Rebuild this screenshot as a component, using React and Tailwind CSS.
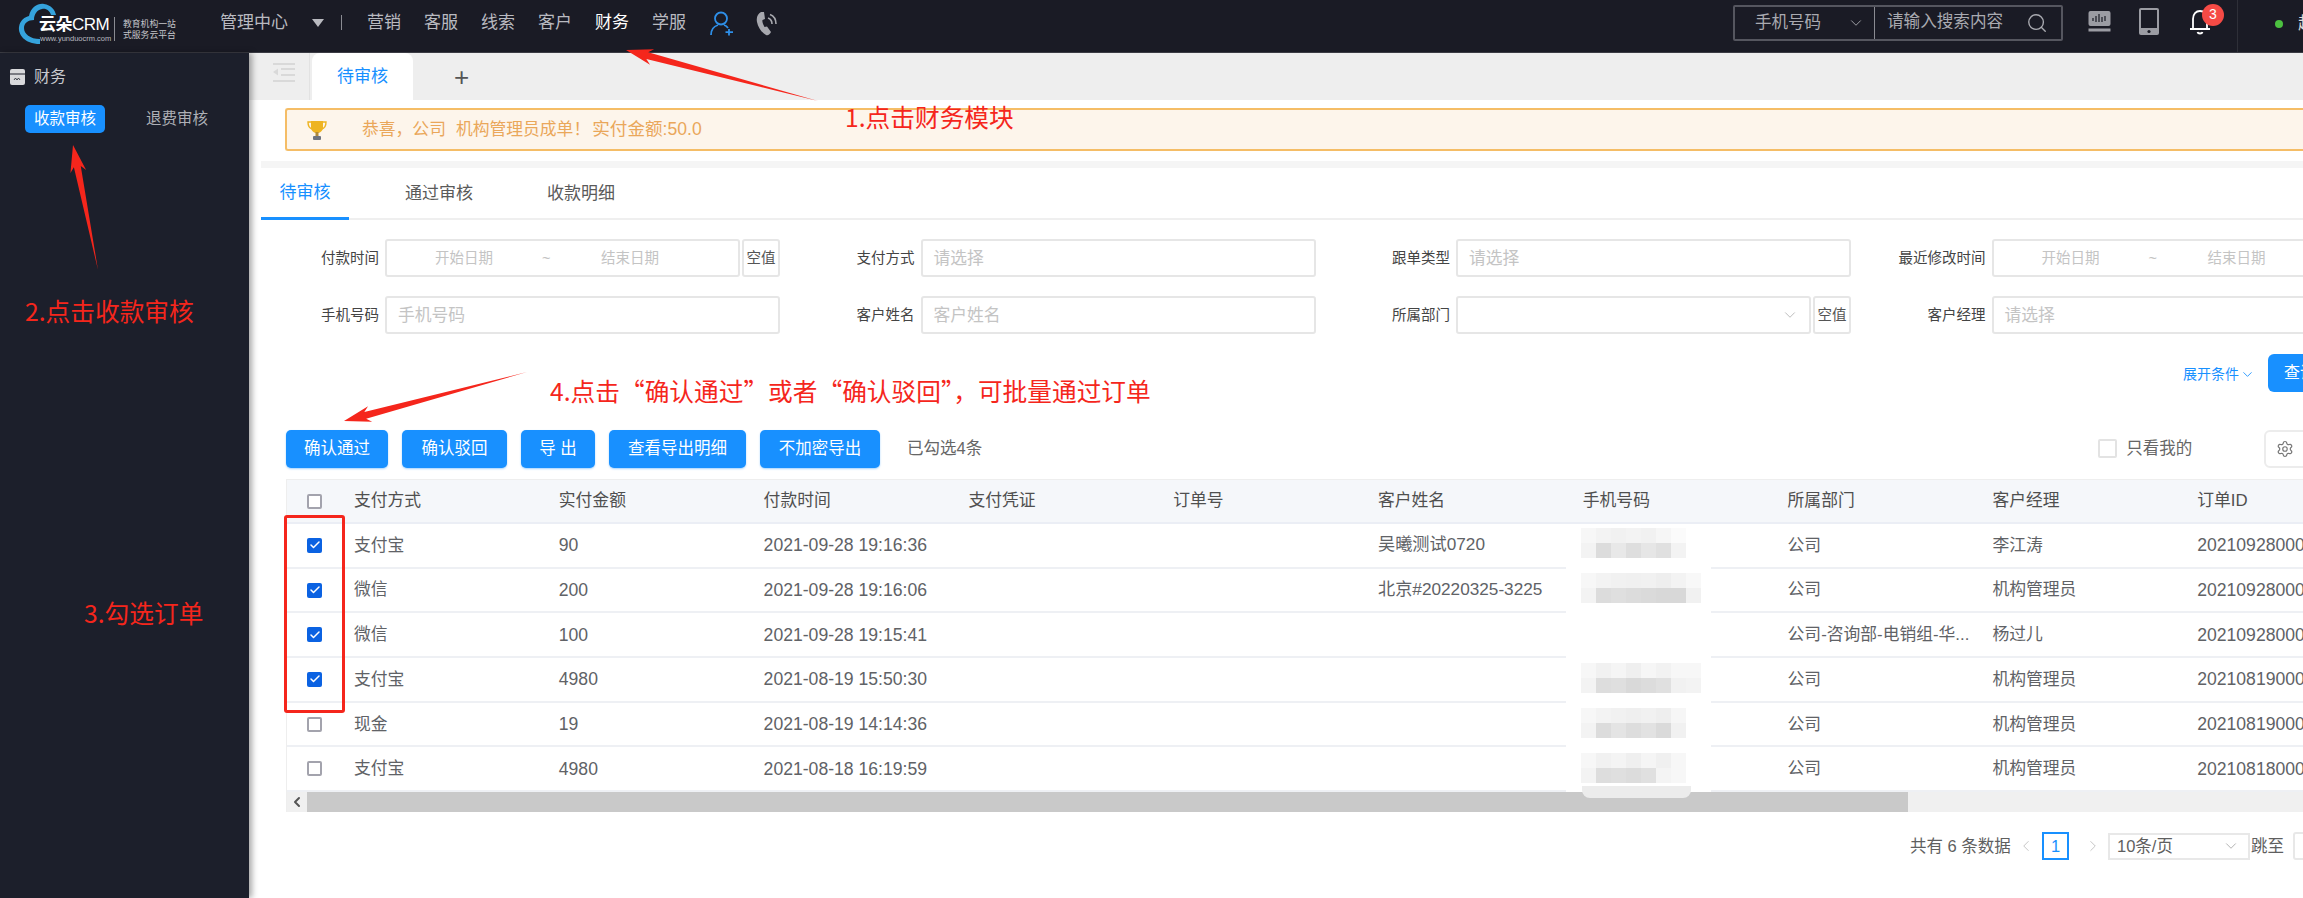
import { Check, ChevronDown, ChevronLeft, ChevronRight, Search, Settings } from "lucide-react"

const navItems = ["营销", "客服", "线索", "客户", "财务", "学服"]
const columns = ["支付方式", "实付金额", "付款时间", "支付凭证", "订单号", "客户姓名", "手机号码", "所属部门", "客户经理", "订单ID"]
const rows = [
  { pay: "支付宝", amount: "90", time: "2021-09-28 19:16:36", name: "吴曦测试0720", dept: "公司", owner: "李江涛", id: "2021092800012", checked: true },
  { pay: "微信", amount: "200", time: "2021-09-28 19:16:06", name: "北京#20220325-3225", dept: "公司", owner: "机构管理员", id: "2021092800011", checked: true },
  { pay: "微信", amount: "100", time: "2021-09-28 19:15:41", name: "", dept: "公司-咨询部-电销组-华...", owner: "杨过儿", id: "2021092800010", checked: true },
  { pay: "支付宝", amount: "4980", time: "2021-08-19 15:50:30", name: "", dept: "公司", owner: "机构管理员", id: "2021081900009", checked: true },
  { pay: "现金", amount: "19", time: "2021-08-19 14:14:36", name: "", dept: "公司", owner: "机构管理员", id: "2021081900008", checked: false },
  { pay: "支付宝", amount: "4980", time: "2021-08-18 16:19:59", name: "", dept: "公司", owner: "机构管理员", id: "2021081800007", checked: false },
]
const actions = [
  { label: "确认通过", w: "w-[102px]" },
  { label: "确认驳回", w: "w-[105px]" },
  { label: "导 出", w: "w-[74px]" },
  { label: "查看导出明细", w: "w-[137px]" },
  { label: "不加密导出", w: "w-[120px]" },
]

// mosaic over the phone column: top pixel row, bottom pixel row
const mosaic = [
  { top: "top-[3px]", a: ["bg-[#f7f7f7]", "bg-[#f3f3f3]", "bg-[#f1f1f1]", "bg-[#f3f3f3]", "bg-[#f1f1f1]", "bg-[#f6f6f6]", "bg-[#fbfbfb]", "bg-white"], b: ["bg-[#f3f3f3]", "bg-[#dcdcdc]", "bg-[#e8e8e8]", "bg-[#dedede]", "bg-[#e6e6e6]", "bg-[#e0e0e0]", "bg-[#f3f3f3]", "bg-white"] },
  { top: "top-[48px]", a: ["bg-[#f7f7f7]", "bg-[#f3f3f3]", "bg-[#f1f1f1]", "bg-[#f0f0f0]", "bg-[#f1f1f1]", "bg-[#eeeeee]", "bg-[#f3f3f3]", "bg-[#f8f8f8]"], b: ["bg-[#f3f3f3]", "bg-[#dcdcdc]", "bg-[#dfdfdf]", "bg-[#dcdcdc]", "bg-[#dadada]", "bg-[#d8d8d8]", "bg-[#d8d8d8]", "bg-[#f1f1f1]"] },
  { top: "top-[138px]", a: ["bg-[#f7f7f7]", "bg-[#f1f1f1]", "bg-[#f5f5f5]", "bg-[#efefef]", "bg-[#f6f6f6]", "bg-[#f2f2f2]", "bg-[#f7f7f7]", "bg-[#f7f7f7]"], b: ["bg-[#f3f3f3]", "bg-[#dddddd]", "bg-[#dfdfdf]", "bg-[#d9d9d9]", "bg-[#dcdcdc]", "bg-[#e0e0e0]", "bg-[#f1f1f1]", "bg-[#f3f3f3]"] },
  { top: "top-[183px]", a: ["bg-[#f7f7f7]", "bg-[#f3f3f3]", "bg-[#f1f1f1]", "bg-[#efefef]", "bg-[#f1f1f1]", "bg-[#eeeeee]", "bg-[#f6f6f6]", "bg-white"], b: ["bg-[#f3f3f3]", "bg-[#dcdcdc]", "bg-[#e4e4e4]", "bg-[#dddddd]", "bg-[#e2e2e2]", "bg-[#dadada]", "bg-[#f1f1f1]", "bg-white"] },
  { top: "top-[228px]", a: ["bg-[#f7f7f7]", "bg-[#f1f1f1]", "bg-[#f4f4f4]", "bg-[#efefef]", "bg-[#f5f5f5]", "bg-[#f0f0f0]", "bg-[#f7f7f7]", "bg-white"], b: ["bg-[#f3f3f3]", "bg-[#dddddd]", "bg-[#dfdfdf]", "bg-[#dcdcdc]", "bg-[#e0e0e0]", "bg-[#f4f4f4]", "bg-[#f7f7f7]", "bg-white"] },
]

function arrowPoints(x1, y1, x2, y2) {
  const len = Math.hypot(x2 - x1, y2 - y1)
  const dx = (x2 - x1) / len
  const dy = (y2 - y1) / len
  const at = (back, side) => `${x2 - dx * back - dy * side},${y2 - dy * back + dx * side}`
  return [`${x1},${y1}`, at(22, 3.5), at(27, 8), at(0, 0), at(27, -8), at(22, -3.5)].join(" ")
}

function Box({ checked }) {
  if (checked) {
    return (
      <span className="flex h-[15px] w-[15px] items-center justify-center rounded-[2px] bg-[#0b62e2]">
        <Check size={12} strokeWidth={3} color="#fff" />
      </span>
    )
  }
  return <span className="block h-[15px] w-[15px] rounded-[2px] border-2 border-[#a3a3ad] bg-white" />
}

function Field({ label, children }) {
  return (
    <div className="flex items-center gap-[6px]">
      <span className="w-[118px] pt-[1px] text-right text-[14.5px] text-[#444]">{label}</span>
      <div className="flex h-[38px] w-[395px] gap-[2px] text-[16.8px]">{children}</div>
    </div>
  )
}

function TextBox({ text }) {
  return (
    <div className="flex h-full flex-1 items-center rounded-[3px] border-2 border-[#e6e6e6] pl-[11px] pt-[2px] text-[#c4c4c4]">{text}</div>
  )
}

function DateBox() {
  return (
    <div className="flex h-full flex-1 items-center rounded-[3px] border-2 border-[#e6e6e6] pt-[2px] text-[14.5px] text-[#c4c4c4]">
      <span className="ml-[48px] w-[58px]">开始日期</span>
      <span className="ml-[49px] w-[58px]">~</span>
      <span className="ml-[1px]">结束日期</span>
    </div>
  )
}

function EmptyValue() {
  return (
    <div className="flex h-full w-[38px] shrink-0 items-center justify-center rounded-[3px] border-2 border-[#e6e6e6] pt-[1px] text-[14.5px] text-[#555]">空值</div>
  )
}

export default function App() {
  return (
    <div className="relative h-[898px] w-[2303px] overflow-hidden bg-white font-['Liberation_Sans','Noto_Sans_CJK_SC',sans-serif]">
      {/* top bar */}
      <header className="flex h-[53px] w-max items-center whitespace-nowrap border-b border-[#3b3c44] bg-[#1a1b25] pb-[7px] text-[17px] text-[#b9bac0]">
        <div className="relative ml-[18px] flex h-[52px] w-[190px] shrink-0 items-center self-start">
          <svg width="60" height="44" viewBox="0 0 60 44" className="absolute left-0 top-[2px]">
            <path d="M22 42 C6 42 0 32 1 25 C2 18 7 15 11 14 C13 5 20 1 26 2 C33 3 37 8 38 13 L33 13 C32 9 28 6 24 7 C19 8 16 12 16 18 C10 18 6 21 6 26 C6 32 12 37 22 37 Z" fill="#35a3dc" />
          </svg>
          <div className="absolute left-[21px] top-[15px] text-[17px] leading-[20px] tracking-[-0.5px] text-white"><b>云朵</b>CRM</div>
          <div className="absolute left-[22px] top-[35px] text-[7.5px] leading-[8px] text-[#b9bac0]">www.yunduocrm.com</div>
          <div className="absolute left-[96px] top-[17px] h-[24px] w-px bg-[#8a8b92]" />
          <div className="absolute left-[105px] top-[19px] text-[8.8px] leading-[11px] text-[#c4c5ca]">教育机构一站<br />式服务云平台</div>
        </div>
        <span className="ml-[12px] text-[17px]">管理中心</span>
        <span className="ml-[24px] h-0 w-0 border-x-[6px] border-t-[8px] border-x-transparent border-t-[#b9bac0]" />
        <span className="ml-[17px] h-[15px] w-px bg-[#8a8b92]" />
        <nav className="ml-[25px] flex gap-[23px]">
          {navItems.map((item) => (
            <span key={item} className={item === "财务" ? "text-white" : ""}>{item}</span>
          ))}
        </nav>
        <svg width="24" height="25" viewBox="0 0 24 25" fill="none" stroke="#2e8fe8" strokeWidth="1.8" className="ml-[24px] mt-[2px]">
          <circle cx="11" cy="7.5" r="6" />
          <path d="M1 24 C1 18 5 15 8 14 M14 14 C15.5 14.5 17 15.5 18 17" />
          <path d="M19 18 V24.5 M15.5 21.2 H23" />
        </svg>
        <svg width="24" height="25" viewBox="0 0 24 25" className="ml-[22px] mt-[2px]">
          <path d="M5 1 C2 3 0 6 1 11 C2 16 5 21 10 24 C12 25 14 23 15 21 L11 15.5 L8.5 16 C7 13 6 11 6.5 9 L9 8 L8 1 Z" fill="#a7a8ae" />
          <path d="M12 7 C15 8 16 10 16 13 M14 3.5 C18 5 20 8 20 13" fill="none" stroke="#a7a8ae" strokeWidth="1.6" />
        </svg>
        <div className="ml-[953px] flex h-[36px] w-[330px] shrink-0 items-center rounded-[2px] border-2 border-[#55565f] text-[16.5px] text-[#a9aab0]">
          <span className="ml-[20px] w-[70px]">手机号码</span>
          <ChevronDown size={18} strokeWidth={1.2} className="ml-[22px]" />
          <span className="ml-[9px] h-[32px] w-px bg-[#8a8b92]" />
          <span className="ml-[12px] text-[16.6px]">请输入搜索内容</span>
          <Search size={22} strokeWidth={1.5} className="ml-[23px]" />
        </div>
        <svg width="23" height="21" viewBox="0 0 23 21" className="mb-[3px] ml-[25px]">
          <rect x="0.5" y="0" width="22" height="15" rx="2" fill="#9b9ca3" />
          <path d="M5 10 V7 M8 11 V5 M11 11 V3 M14 11 V6 M17 10 V5" stroke="#1a1b25" strokeWidth="1.2" />
          <rect x="0.5" y="17.5" width="22" height="3" fill="#9b9ca3" />
        </svg>
        <svg width="20" height="27" viewBox="0 0 20 27" className="mb-[3px] ml-[28px]">
          <rect width="20" height="27" rx="2" fill="#9b9ca3" />
          <rect x="2" y="2" width="16" height="18" fill="#1a1b25" />
          <circle cx="10" cy="23.5" r="1.6" fill="#1a1b25" />
        </svg>
        <div className="relative mb-[3px] ml-[30px]">
          <svg width="22" height="27" viewBox="0 0 22 27" fill="none" stroke="#fff" strokeWidth="1.8" className="block">
            <path d="M4 21 V11 C4 6 7 3 11 3 C15 3 18 6 18 11 V21 Z" />
            <path d="M1 21 H21 M8.5 24 C9 26 13 26 13.5 24" />
          </svg>
          <span className="absolute left-[13px] top-[-4px] flex h-[22px] w-[22px] items-center justify-center rounded-full bg-[#f54a45] text-[14px] text-white">3</span>
        </div>
        <span className="ml-[26px] h-[52px] w-px self-start bg-[#2e2f38]" />
        <span className="ml-[37px] mt-[3px] h-[8px] w-[8px] shrink-0 rounded-full bg-[#4cc140]" />
        <span className="ml-[15px] mt-[3px] text-[17px] text-[#dcdcdc]">超级管理员</span>
      </header>

      <div className="flex h-[845px]">
        {/* side menu */}
        <aside className="relative z-10 w-[249px] shrink-0 bg-[#1c1f2b] shadow-[3px_0_6px_rgba(0,0,0,0.35)]">
          <div className="flex items-center pl-[10px] pt-[12px] text-[16px] text-[#c8c9ce]">
            <svg width="15" height="16" viewBox="0 0 15 16">
              <rect width="15" height="16" rx="2" fill="#d9d9dc" />
              <path d="M0 5 H15" stroke="#1c1f2b" strokeWidth="1" />
              <path d="M4 11 L5.5 9 L7 11 L8.5 9 L10 11" stroke="#1c1f2b" strokeWidth="0.8" fill="none" />
            </svg>
            <span className="ml-[9px]">财务</span>
          </div>
          <div className="ml-[25px] mt-[16px] flex items-center text-[15.5px]">
            <span className="flex h-[28px] w-[80px] items-center justify-center rounded-[5px] bg-[#1890ff] text-white">收款审核</span>
            <span className="ml-[41px] text-[#aeb0b6]">退费审核</span>
          </div>
        </aside>

        <main className="min-w-0 flex-1">
          {/* page tabs */}
          <div className="flex h-[47px] items-end bg-[#eeeeee]">
            <svg width="22" height="19" viewBox="0 0 22 19" fill="#d9d9d9" className="mb-[18px] ml-[24px]">
              <rect y="0" width="22" height="2" />
              <rect x="8" y="5" width="14" height="2" />
              <rect x="8" y="11" width="14" height="2" />
              <rect y="17" width="22" height="2" />
              <path d="M0 9 L5 5.5 V12.5 Z" />
            </svg>
            <span className="ml-[14px] h-[47px] w-px bg-[#e2e2e2]" />
            <div className="ml-[2px] flex h-[47px] w-[101px] items-center justify-center rounded-t-[8px] bg-white text-[17px] text-[#1890ff]">待审核</div>
            <div className="mb-[8px] ml-[41px] text-[26px] font-light leading-[30px] text-[#555]">+</div>
          </div>

          <div className="pl-[12px]">
            {/* notice */}
            <div className="h-[61px] pl-[24px] pt-[8px]">
              <div className="flex h-[43px] items-center rounded-l-[3px] border-y-2 border-l-2 border-[#f5bd66] bg-[#fdf5eb] text-[16.8px] text-[#eaa75a]">
                <svg width="20" height="20" viewBox="0 0 20 20" className="ml-[20px]">
                  <path d="M4 1 H16 V7 C16 11 13 13 10 13 C7 13 4 11 4 7 Z" fill="#eeb422" />
                  <path d="M4 2 H1 C1 6 2 8 5 9 M16 2 H19 C19 6 18 8 15 9" stroke="#eeb422" strokeWidth="1.4" fill="none" />
                  <rect x="8.5" y="12" width="3" height="4" fill="#b08a3a" />
                  <rect x="6" y="16" width="8" height="4" rx="1" fill="#6e7480" />
                </svg>
                <span className="ml-[35px]">恭喜，公司</span>
                <span className="ml-[10px]">机构管理员成单！</span>
                <span className="ml-[2px] text-[17.6px]">实付金额:50.0</span>
              </div>
            </div>
            <div className="h-[7px] bg-[#f5f5f5]" />

            {/* sub tabs */}
            <div className="flex h-[52px] items-end border-b-2 border-[#efefef] text-[17px] text-[#5a5a5a]">
              <div className="mb-[-2px] flex h-[52px] w-[88px] items-center justify-center border-b-[3px] border-[#1890ff] pt-[1px] text-[#1890ff]">待审核</div>
              <div className="ml-[56px] flex h-[50px] items-center pt-[2px]">通过审核</div>
              <div className="ml-[74px] flex h-[50px] items-center pt-[2px]">收款明细</div>
            </div>

            {/* filters */}
            <div className="grid grid-cols-[repeat(4,519px)] gap-x-[16.5px] gap-y-[19px] pt-[19px]">
              <Field label="付款时间"><DateBox /><EmptyValue /></Field>
              <Field label="支付方式"><TextBox text="请选择" /></Field>
              <Field label="跟单类型"><TextBox text="请选择" /></Field>
              <Field label="最近修改时间"><DateBox /></Field>
              <Field label="手机号码"><TextBox text="手机号码" /></Field>
              <Field label="客户姓名"><TextBox text="客户姓名" /></Field>
              <Field label="所属部门">
                <div className="flex h-full flex-1 items-center justify-end rounded-[3px] border-2 border-[#e6e6e6] pr-[10px] text-[#b5b5b5]">
                  <ChevronDown size={18} strokeWidth={1.2} />
                </div>
                <EmptyValue />
              </Field>
              <Field label="客户经理"><TextBox text="请选择" /></Field>
            </div>

            <div className="mt-[20px] flex h-[38px] items-center justify-end">
              <span className="mt-[2px] text-[14px] text-[#1890ff]">展开条件</span>
              <ChevronDown size={15} strokeWidth={1.4} color="#1890ff" className="ml-[1px] mt-[2px]" />
              <div className="ml-[13px] flex h-[38px] w-[35px] items-center rounded-l-[6px] bg-[#1890ff] pl-[16px] text-[16px] text-white">
                <span className="whitespace-nowrap">查询</span>
              </div>
            </div>

            {/* actions */}
            <div className="ml-[25px] mt-[37px] flex h-[39px] w-max items-center gap-[14px] whitespace-nowrap">
              {actions.map((a) => (
                <button key={a.label} className={`flex h-[38px] items-center justify-center rounded-[5px] bg-[#1890ff] text-[16.5px] text-white shadow-[0_1px_2px_rgba(24,144,255,0.4)] ${a.w}`}>
                  {a.label}
                </button>
              ))}
              <span className="ml-[13px] text-[16.5px] text-[#666]">已勾选4条</span>
              <span className="ml-[1102px] h-[19px] w-[19px] shrink-0 rounded-[2px] border-2 border-[#e3e3e3]" />
              <span className="ml-[-5px] text-[16.5px] text-[#666]">只看我的</span>
              <div className="ml-[58px] flex h-[38px] w-[60px] shrink-0 items-center rounded-[6px] border-2 border-[#ececec] pl-[10px] text-[#777]">
                <Settings size={18} strokeWidth={1.6} />
              </div>
            </div>

            {/* table */}
            <div className="relative ml-[25px] mt-[11px] w-[2300px] border-t border-l border-[#eeeeee]">
              <div className="grid h-[44px] grid-cols-[51px_repeat(10,204.8px)] items-center border-b-2 border-[#ebeef5] bg-[#f5f7fa] text-[16.8px] text-[#4f4f4f]">
                <span className="ml-[20px]"><Box /></span>
                {columns.map((c) => (
                  <span key={c} className="pl-[16px]">{c}</span>
                ))}
              </div>
              {rows.map((row) => (
                <div key={row.time} className="grid h-[44.7px] grid-cols-[51px_repeat(10,204.8px)] items-center border-b-2 border-[#eef0f4] text-[16.8px] text-[#606266]">
                  <span className="ml-[20px]"><Box checked={row.checked} /></span>
                  <span className="pl-[16px]">{row.pay}</span>
                  <span className="pl-[16px] text-[17.6px]">{row.amount}</span>
                  <span className="pl-[16px] text-[17.6px]">{row.time}</span>
                  <span />
                  <span />
                  <span className="pl-[16px] text-[17.2px]">{row.name}</span>
                  <span />
                  <span className="whitespace-nowrap pl-[16px]">{row.dept}</span>
                  <span className="pl-[16px]">{row.owner}</span>
                  <span className="pl-[16px] text-[17.6px]">{row.id}</span>
                </div>
              ))}
              <div className="flex h-[20px] bg-[#f0f0f0]">
                <div className="flex w-[20px] items-center justify-center"><ChevronLeft size={16} strokeWidth={3} color="#555" /></div>
                <div className="h-full w-[1601px] bg-[#c9c9c9]" />
              </div>

              {/* phone numbers are smudged out in the screenshot */}
              <div className="absolute left-[1279px] top-[45px] h-[267px] w-[145px] bg-white">
                {mosaic.map((m) => (
                  <div key={m.top} className={`absolute left-[15px] w-[120px] ${m.top}`}>
                    <div className="flex h-[15px]">{m.a.map((c, i) => <span key={i} className={`w-[15px] ${c}`} />)}</div>
                    <div className="flex h-[15px]">{m.b.map((c, i) => <span key={i} className={`w-[15px] ${c}`} />)}</div>
                  </div>
                ))}
                <div className="absolute bottom-[-6px] left-[16px] h-[12px] w-[109px] rounded-b-[8px] bg-[#ececec]" />
              </div>
            </div>

            {/* pagination */}
            <div className="ml-[1649px] mt-[20px] flex h-[28px] w-max items-center whitespace-nowrap text-[16.5px] text-[#5f5f5f]">
              <span className="w-[103px]">共有 6 条数据</span>
              <ChevronLeft size={18} strokeWidth={1.2} color="#c0c0c0" className="ml-[4px]" />
              <span className="ml-[7px] flex h-[28px] w-[27px] items-center justify-center border-2 border-[#1890ff] text-[#1890ff]">1</span>
              <ChevronRight size={18} strokeWidth={1.2} color="#c0c0c0" className="ml-[15px]" />
              <div className="ml-[6px] flex h-[27px] w-[142px] items-center justify-between border-2 border-[#e8e8e8] pl-[7px] pr-[8px]">
                <span>10条/页</span>
                <ChevronDown size={18} strokeWidth={1.2} color="#aaa" />
              </div>
              <span className="ml-[1px]">跳至</span>
              <span className="ml-[9px] h-[28px] w-[40px] rounded-[3px] border-2 border-[#e8e8e8]" />
            </div>
          </div>
        </main>
      </div>

      {/* red notes drawn on top of the screenshot */}
      <svg width="2303" height="898" className="pointer-events-none absolute left-0 top-0 z-20">
        <polygon points={arrowPoints(818, 101, 626, 50)} fill="#f5261c" />
        <polygon points={arrowPoints(98, 270, 73, 145)} fill="#f5261c" />
        <polygon points={arrowPoints(527, 372, 344, 421)} fill="#f5261c" />
      </svg>
      <div className="pointer-events-none absolute left-[284px] top-[515px] z-20 h-[198px] w-[61px] rounded-[3px] border-[3px] border-[#f5261c]" />
      <div className="font-['Noto_Sans_CJK_SC',sans-serif] text-[24.7px] leading-[30px] text-[#f5261c]">
        <span className="absolute left-[845px] top-[101px] z-20">1.点击财务模块</span>
        <span className="absolute left-[25px] top-[295px] z-20">2.点击收款审核</span>
        <span className="absolute left-[84px] top-[597px] z-20">3.勾选订单</span>
        <span className="absolute left-[550px] top-[375px] z-20 whitespace-nowrap">4.点击“确认通过”或者“确认驳回”，可批量通过订单</span>
      </div>
    </div>
  )
}
